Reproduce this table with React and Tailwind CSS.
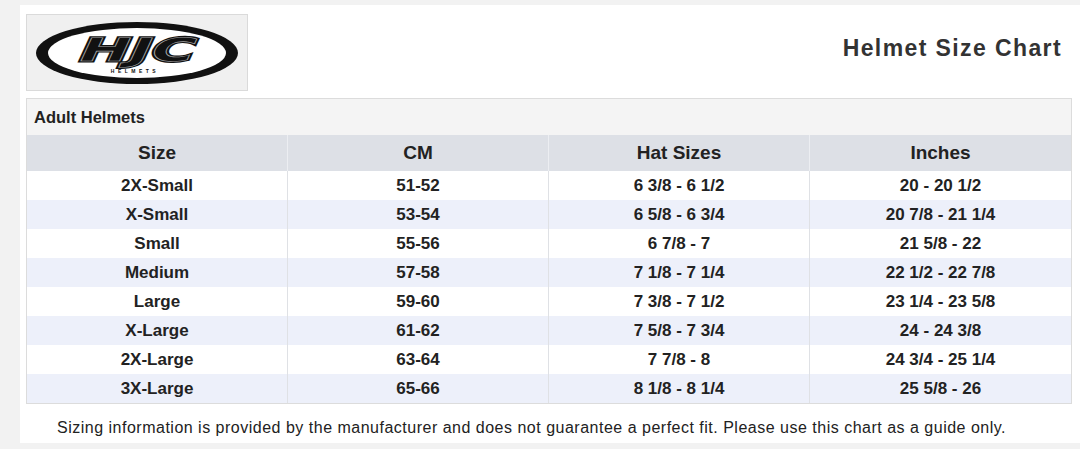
import React from "react";

const rows = [
  ["2X-Small", "51-52", "6 3/8 - 6 1/2", "20 - 20 1/2"],
  ["X-Small", "53-54", "6 5/8 - 6 3/4", "20 7/8 - 21 1/4"],
  ["Small", "55-56", "6 7/8 - 7", "21 5/8 - 22"],
  ["Medium", "57-58", "7 1/8 - 7 1/4", "22 1/2 - 22 7/8"],
  ["Large", "59-60", "7 3/8 - 7 1/2", "23 1/4 - 23 5/8"],
  ["X-Large", "61-62", "7 5/8 - 7 3/4", "24 - 24 3/8"],
  ["2X-Large", "63-64", "7 7/8 - 8", "24 3/4 - 25 1/4"],
  ["3X-Large", "65-66", "8 1/8 - 8 1/4", "25 5/8 - 26"],
];

// logo: black oval ring, heavy slanted letters
const HjcLogo = () => (
  <svg width="206" height="66" viewBox="0 0 206 66">
    <ellipse cx="103" cy="33" rx="101" ry="31" fill="#111" />
    <ellipse cx="103" cy="33" rx="89" ry="25" fill="#fff" />
    <g transform="translate(103 0) scale(1.85 1) skewX(-14)">
      <text
        x="8"
        y="41"
        textAnchor="middle"
        fontFamily="'DejaVu Sans', sans-serif"
        fontWeight="700"
        fontSize="32"
        fill="#111"
        stroke="#111"
        strokeWidth="3"
        strokeLinejoin="miter"
      >
        HJC
      </text>
      <text
        x="8"
        y="41"
        textAnchor="middle"
        fontFamily="'DejaVu Sans', sans-serif"
        fontWeight="700"
        fontSize="32"
        fill="#111"
        stroke="#a5a5a5"
        strokeWidth="0.55"
      >
        HJC
      </text>
    </g>
    <text
      x="101"
      y="53"
      textAnchor="middle"
      fontFamily="'Liberation Sans', Arial, sans-serif"
      fontWeight="700"
      fontSize="5"
      fill="#111"
      letterSpacing="3.5"
    >
      HELMETS
    </text>
  </svg>
);

export default function App() {
  return (
    <div className="h-[449px] bg-[#f2f2f2] pt-[5px] pl-[20px] pb-[6px] font-['Liberation_Sans',Arial,sans-serif] text-[#222]">
      <div className="h-full bg-white pt-[9px] pl-[6px]">
        <div className="flex items-start justify-between pr-[18px]">
          <div className="w-[222px] h-[77px] bg-[#f0f0f0] border border-[#dadada] flex items-center justify-center">
            <HjcLogo />
          </div>
          <h1 className="mt-[17px] text-[23px] font-bold text-[#333] tracking-[1.4px]">
            Helmet Size Chart
          </h1>
        </div>

        <div className="mt-[7px] w-[1046px] border border-[#dcdcdc] bg-[#f4f4f4]">
          <div className="h-[36px] pl-[7px] flex items-center text-[16.5px] font-bold text-[#222]">
            Adult Helmets
          </div>
          <div className="grid grid-cols-4 h-[36px] bg-[#dde0e6] text-[19px] font-bold text-[#222]">
            {["Size", "CM", "Hat Sizes", "Inches"].map((h, i) => (
              <div
                key={h}
                className={
                  "flex items-center justify-center " +
                  (i < 3 ? "border-r border-[#eceef2]" : "")
                }
              >
                {h}
              </div>
            ))}
          </div>
          {rows.map((r, ri) => (
            <div
              key={r[0]}
              className={
                "grid grid-cols-4 h-[29px] text-[17px] font-bold text-[#222] " +
                (ri % 2 === 0 ? "bg-white" : "bg-[#edf0fa]")
              }
            >
              {r.map((c, i) => (
                <div
                  key={i}
                  className={
                    "flex items-center justify-center " +
                    (i < 3 ? "border-r border-[#dfe1e5]" : "")
                  }
                >
                  {c}
                </div>
              ))}
            </div>
          ))}
        </div>

        <p className="mt-[12px] pl-[31px] text-[16px] text-[#222] tracking-[0.5px]">
          Sizing information is provided by the manufacturer and does not guarantee a perfect fit. Please use this chart as a guide only.
        </p>
      </div>
    </div>
  );
}
